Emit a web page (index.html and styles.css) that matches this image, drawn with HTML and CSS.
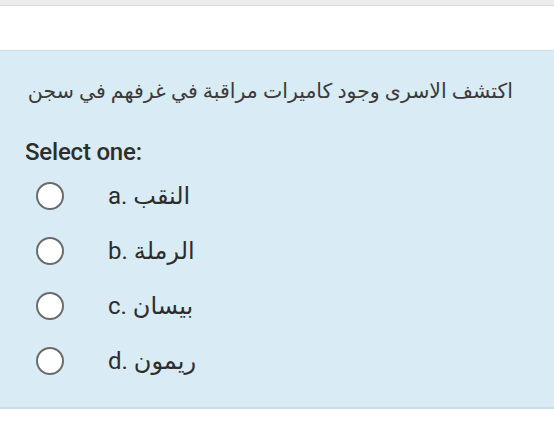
FILE: index.html
```html
<!DOCTYPE html>
<html>
<head>
<meta charset="utf-8">
<link rel="stylesheet" href="styles.css">
</head>
<body>
<div class="topbar"></div>
<div class="spacer"></div>
<div class="qbox">
  <div class="qtext" dir="rtl">اكتشف الاسرى وجود كاميرات مراقبة في غرفهم في سجن</div>
  <div class="prompt">Select one:</div>
  <div class="answers">
    <div class="opt"><span class="radio"></span><span class="label">a. النقب</span></div>
    <div class="opt"><span class="radio"></span><span class="label">b. الرملة</span></div>
    <div class="opt"><span class="radio"></span><span class="label">c. بيسان</span></div>
    <div class="opt"><span class="radio"></span><span class="label">d. ريمون</span></div>
  </div>
</div>
</body>
</html>
```
FILE: styles.css
```css
html, body {
  margin: 0;
  padding: 0;
  background: #ffffff;
  font-family: Roboto, "Noto Sans", "DejaVu Sans", sans-serif;
  color: #333333;
}
.topbar {
  height: 5px;
  background: #ececec;
  border-bottom: 1px solid #d9d9d9;
}
.spacer {
  height: 44px;
}
.qbox {
  background: #d9ecf5;
  border-top: 1px solid #c4e1ec;
  border-bottom: 2px solid #c6dde6;
  height: 356px;
  padding: 0 41px 0 25px;
  box-sizing: content-box;
}
.qtext {
  font-size: 20.5px;
  line-height: 28px;
  padding-top: 26px;
  text-align: right;
  white-space: nowrap;
  color: #3a3a3a;
}
.prompt {
  font-size: 24px;
  font-weight: 500;
  line-height: 28px;
  margin-top: 33px;
  color: #2d2d2d;
  letter-spacing: -0.2px;
}
.answers {
  display: flex;
  flex-direction: column;
  gap: 25px;
  margin-top: 15px;
}
.opt {
  display: flex;
  align-items: center;
  height: 30px;
}
.radio {
  width: 24px;
  height: 24px;
  border: 2.5px solid #6b6b6b;
  border-radius: 50%;
  background: #ffffff;
  margin-left: 11px;
}
.label {
  margin-left: 44px;
  font-size: 24px;
  line-height: 30px;
  color: #2d2d2d;
}
```
